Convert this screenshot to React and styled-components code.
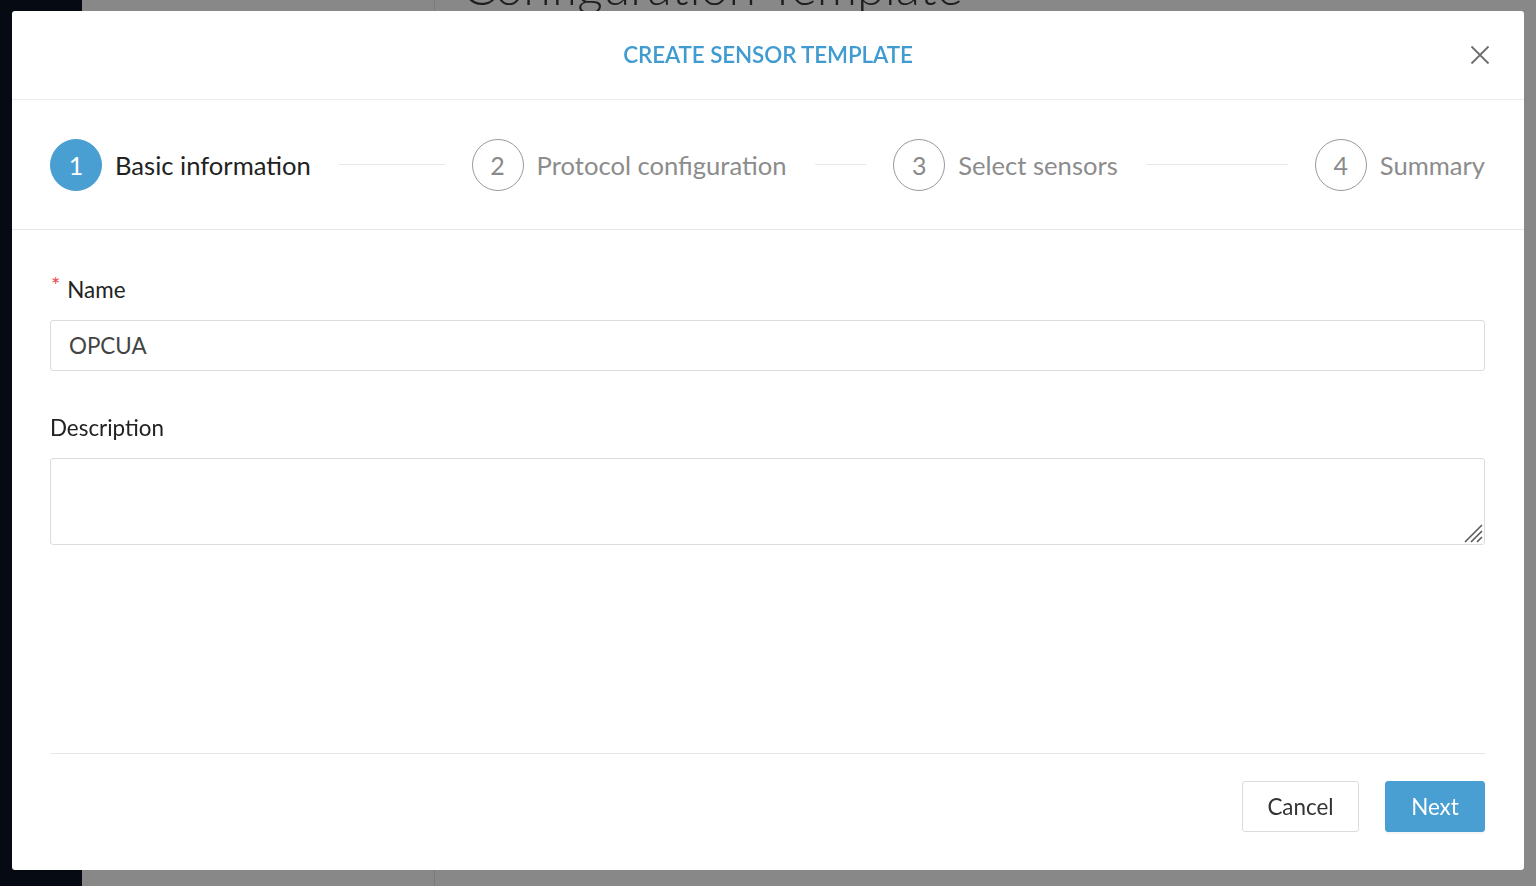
import React, { useState } from "react";
import styled, { createGlobalStyle } from "styled-components";

const GlobalStyle = createGlobalStyle`
  html, body {
    margin: 0;
    padding: 0;
    height: 100%;
    overflow: hidden;
  }
  body {
    font-family: Lato, "Liberation Sans", sans-serif;
    background: #fff;
  }
  * {
    box-sizing: border-box;
  }
`;

const steps = [
  { num: 1, title: "Basic information" },
  { num: 2, title: "Protocol configuration" },
  { num: 3, title: "Select sensors" },
  { num: 4, title: "Summary" },
];

function App() {
  const [name, setName] = useState("OPCUA");
  const [description, setDescription] = useState("");
  const current = 1;

  return (
    <>
      <GlobalStyle />
      <Page>
        <SideNav />
        <Main>
          <MainColumn />
          <MainContent>
            <PageHeading>Configuration Template</PageHeading>
          </MainContent>
        </Main>
      </Page>

      <Overlay>
        <Modal>
          <ModalHeader>
            <ModalTitle>CREATE SENSOR TEMPLATE</ModalTitle>
            <CloseButton aria-label="close">
              <svg width="20" height="20" viewBox="0 0 20 20">
                <path
                  d="M1.5 1.5 L18.5 18.5 M18.5 1.5 L1.5 18.5"
                  stroke="#6e6e6e"
                  strokeWidth="1.8"
                  fill="none"
                />
              </svg>
            </CloseButton>
          </ModalHeader>

          <StepsBar>
            {steps.map((step, i) => (
              <Step key={step.num} last={i === steps.length - 1}>
                <StepIcon active={step.num === current}>{step.num}</StepIcon>
                <StepTitle active={step.num === current}>{step.title}</StepTitle>
                {i !== steps.length - 1 && <StepLine />}
              </Step>
            ))}
          </StepsBar>

          <FormBody>
            <Field>
              <Label>
                <Required>*</Required>
                Name
              </Label>
              <Input value={name} onChange={(e) => setName(e.target.value)} />
            </Field>
            <Field>
              <Label>Description</Label>
              <TextAreaWrap>
                <TextArea
                  value={description}
                  onChange={(e) => setDescription(e.target.value)}
                />
                <ResizeHandle width="22" height="22" viewBox="0 0 22 22">
                  <path
                    d="M20 3 L3 20 M20 9 L9 20 M20 15 L15 20"
                    stroke="#5a5a5a"
                    strokeWidth="1.6"
                    fill="none"
                  />
                </ResizeHandle>
              </TextAreaWrap>
            </Field>
          </FormBody>

          <Footer>
            <Button>Cancel</Button>
            <Button primary>Next</Button>
          </Footer>
        </Modal>
      </Overlay>
    </>
  );
}

const Page = styled.div`
  display: flex;
  width: 100vw;
  height: 100vh;
`;
const SideNav = styled.div`
  width: 82px;
  flex: none;
  background: #0d1422;
`;
const Main = styled.div`
  flex: 1;
  display: flex;
  background: #fff;
`;
const MainColumn = styled.div`
  width: 353px;
  flex: none;
  border-right: 1px solid #e6e6e6;
`;
const MainContent = styled.div`
  flex: 1;
  padding-left: 27px;
`;
const PageHeading = styled.h1`
  margin: -44px 0 0;
  font-family: Lato, "Liberation Sans", sans-serif;
  font-weight: 300;
  font-size: 50px;
  line-height: 60px;
  color: #3a3a3a;
`;

const Overlay = styled.div`
  position: fixed;
  inset: 0;
  background: rgba(0, 0, 0, 0.465);
  padding: 11px 12px 16px 12px;
  display: flex;
`;
const Modal = styled.div`
  width: 1512px;
  height: 859px;
  background: #fff;
  border-radius: 3px;
  display: flex;
  flex-direction: column;
`;
const ModalHeader = styled.div`
  position: relative;
  height: 89px;
  flex: none;
  display: flex;
  align-items: center;
  justify-content: center;
  border-bottom: 1px solid #ececec;
`;
const ModalTitle = styled.div`
  font-size: 22.4px;
  font-weight: 600;
  color: #3f9bd0;
  letter-spacing: -0.1px;
  margin-top: -1px;
`;
const CloseButton = styled.button`
  position: absolute;
  right: 34px;
  top: 34px;
  width: 20px;
  height: 20px;
  padding: 0;
  border: none;
  background: none;
  cursor: pointer;
  display: flex;
`;

const StepsBar = styled.div`
  height: 130px;
  flex: none;
  display: flex;
  align-items: center;
  padding: 0 39px 0 38px;
  border-bottom: 1px solid #e6e6e6;
`;
const Step = styled.div`
  display: flex;
  align-items: center;
  flex: ${(p) => (p.last ? "none" : "1")};
  min-width: 0;
`;
const StepIcon = styled.div`
  width: 52px;
  height: 52px;
  flex: none;
  border-radius: 50%;
  display: flex;
  align-items: center;
  justify-content: center;
  font-size: 25px;
  padding-top: 1px;
  color: ${(p) => (p.active ? "#fff" : "#8a8a8a")};
  background: ${(p) => (p.active ? "#4a9fd2" : "#fff")};
  border: 1.5px solid ${(p) => (p.active ? "#4a9fd2" : "#9a9a9a")};
`;
const StepTitle = styled.div`
  margin-left: 13px;
  font-size: 25.6px;
  white-space: nowrap;
  color: ${(p) => (p.active ? "#222" : "#8c8c8c")};
`;
const StepLine = styled.div`
  flex: 1;
  height: 1px;
  background: #e8e8e8;
  margin: 0 27px 0 28px;
`;

const FormBody = styled.div`
  flex: 1;
  padding: 43px 39px 0 38px;
  display: flex;
  flex-direction: column;
  gap: 40px;
`;
const Field = styled.div`
  display: flex;
  flex-direction: column;
  gap: 13px;
`;
const Label = styled.label`
  font-size: 22.4px;
  line-height: 34px;
  color: #222;
  display: flex;
  align-items: flex-start;
`;
const Required = styled.span`
  color: #e5484d;
  font-size: 22px;
  line-height: 20px;
  margin: 2px 7px 0 1px;
`;
const Input = styled.input`
  height: 51px;
  width: 100%;
  border: 1px solid #dcdcdc;
  border-radius: 3px;
  padding: 0 18px;
  font-family: Lato, "Liberation Sans", sans-serif;
  font-size: 22.4px;
  color: #444;
  outline: none;
`;
const TextAreaWrap = styled.div`
  position: relative;
`;
const TextArea = styled.textarea`
  height: 87px;
  width: 100%;
  border: 1px solid #dcdcdc;
  border-radius: 3px;
  padding: 8px 18px;
  font-family: Lato, "Liberation Sans", sans-serif;
  font-size: 22.4px;
  color: #444;
  outline: none;
  resize: none;
  display: block;
`;
const ResizeHandle = styled.svg`
  position: absolute;
  right: 1px;
  bottom: 1px;
  pointer-events: none;
`;

const Footer = styled.div`
  flex: none;
  margin: 0 39px 0 38px;
  border-top: 1px solid #e8e8e8;
  padding: 27px 0 38px;
  display: flex;
  justify-content: flex-end;
  gap: 26px;
`;
const Button = styled.button`
  height: 51px;
  width: ${(p) => (p.primary ? "100px" : "117px")};
  padding: 0;
  border-radius: 3px;
  font-family: Lato, "Liberation Sans", sans-serif;
  font-size: 22.4px;
  cursor: pointer;
  color: ${(p) => (p.primary ? "#fff" : "#333")};
  background: ${(p) => (p.primary ? "#4a9fd2" : "#fff")};
  border: 1px solid ${(p) => (p.primary ? "#4a9fd2" : "#dcdcdc")};
  box-shadow: ${(p) => (p.primary ? "0 2px 0 rgba(0,0,0,0.04)" : "none")};
`;

export default App;
